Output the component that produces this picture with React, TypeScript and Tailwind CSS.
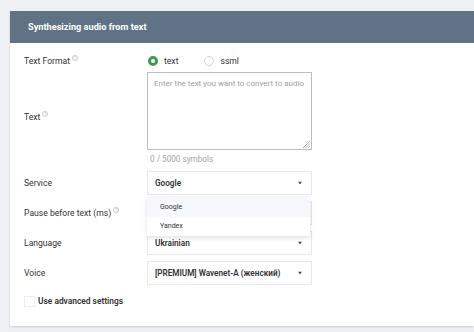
const font = { fontFamily: 'Roboto, "Noto Sans", sans-serif' };

function Hint() {
  return (
    <span className="ml-[2px] -mt-[6px] inline-flex h-[6px] w-[6px] items-center justify-center rounded-full border border-[#c8c8c8] text-[4px] leading-none text-[#bbb]">
      ?
    </span>
  );
}

function Caret() {
  return (
    <svg width="4" height="3" viewBox="0 0 4 3" className="absolute right-[9px] top-1/2 -translate-y-1/2">
      <path d="M0 0h4L2 3z" fill="#444" />
    </svg>
  );
}

function Select({ value }: { value: string }) {
  return (
    <div className="relative flex h-[24px] w-[165px] items-center border border-[#e6e8ea] pl-[7px] text-[8.2px] font-semibold text-[#333]">
      {value}
      <Caret />
    </div>
  );
}

function Row({ label, hint, children, className = "" }: { label: string; hint?: boolean; children: React.ReactNode; className?: string }) {
  return (
    <div className={`flex items-center ${className}`}>
      <div className="flex w-[123px] items-center text-[8.6px] text-[#333]">
        {label}
        {hint && <Hint />}
      </div>
      {children}
    </div>
  );
}

export default function App() {
  return (
    <div className="h-[332px] overflow-hidden bg-[#eef0f3] pl-[10px] pt-[11px]" style={font}>
      <div className="h-[315px] w-[464px] bg-white shadow-[0_1px_2px_rgba(0,0,0,0.15)]">
        <div className="flex h-[32px] items-center bg-[#5f7384] pl-[18px] text-[9.2px] font-bold text-white">
          Synthesizing audio from text
        </div>

        <div className="pl-[14px]">
          {/* Text format */}
          <Row label="Text Format" hint className="mt-[9px] h-[18px]">
            <div className="flex items-center text-[8.6px] text-[#333]">
              <span className="ml-[1px] h-[10px] w-[10px] rounded-full border-[3px] border-[#3d9c4f] bg-white" />
              <span className="ml-[6px]">text</span>
              <span className="ml-[26px] h-[10px] w-[10px] rounded-full border border-[#d5d5d5] bg-white" />
              <span className="ml-[6px]">ssml</span>
            </div>
          </Row>

          {/* Text */}
          <div className="mt-[2px] flex">
            <div className="flex w-[123px] items-center self-start pt-[39px] text-[8.6px] text-[#333]">
              Text
              <Hint />
            </div>
            <div className="relative h-[78px] w-[165px] border border-[#bdbdbd] px-[6px] pt-[5px] text-[8px] text-[#a0a0a0]">
              Enter the text you want to convert to audio
              <svg width="8" height="8" viewBox="0 0 8 8" className="absolute bottom-[1px] right-[1px]">
                <path d="M8 1L1 8M8 3.5L3.5 8M8 6L6 8" stroke="#999" strokeWidth="0.8" />
              </svg>
            </div>
          </div>
          <div className="ml-[126px] mt-[3px] h-[12px] text-[8.2px] leading-[12px] text-[#a5a5a5]">0 / 5000 symbols</div>

          {/* Service */}
          <Row label="Service" className="mt-[6px]">
            <div className="relative">
              <Select value="Google" />
              <div className="absolute left-0 top-[26px] z-10 w-[163px] bg-white text-[7px] text-[#333] shadow-[0_2px_5px_rgba(0,0,0,0.12)]">
                <div className="flex h-[20px] items-center bg-[#f6f8fb] pl-[13px]">Google</div>
                <div className="flex h-[19px] items-center pl-[13px]">Yandex</div>
              </div>
            </div>
          </Row>

          <Row label="Pause before text (ms)" hint className="mt-[6px]">
            <div className="h-[24px] w-[165px] border border-[#e6e8ea]" />
          </Row>

          <Row label="Language" className="mt-[6px]">
            <Select value="Ukrainian" />
          </Row>

          <Row label="Voice" className="mt-[6px]">
            <Select value="[PREMIUM] Wavenet-A (женский)" />
          </Row>

          <div className="mt-[9px] flex h-[14px] items-center">
            <span className="h-[11px] w-[11px] border border-[#eceef0]" />
            <span className="ml-[3px] text-[8.4px] font-semibold text-[#333]">Use advanced settings</span>
          </div>
        </div>
      </div>
    </div>
  );
}
